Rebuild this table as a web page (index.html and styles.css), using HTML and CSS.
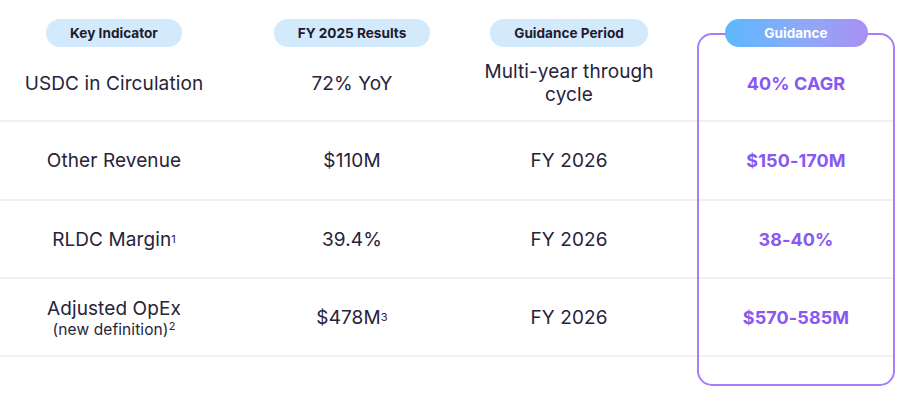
FILE: index.html
```
<!DOCTYPE html>
<html lang="en">
<head>
<meta charset="utf-8">
<title>Guidance</title>
<link rel="stylesheet" href="styles.css">
</head>
<body>
<div class="table">
  <div class="head c1"><span class="pill">Key Indicator</span></div>
  <div class="head c2"><span class="pill">FY 2025 Results</span></div>
  <div class="head c3"><span class="pill">Guidance Period</span></div>
  <div class="guide-box"><span class="pill pill-guide">Guidance</span></div>

  <div class="cell c1 r1">USDC in Circulation</div>
  <div class="cell c2 r1">72% YoY</div>
  <div class="cell c3 r1">Multi-year through<br>cycle</div>
  <div class="cell c5 r1 val">40% CAGR</div>
  <div class="line l1"></div>

  <div class="cell c1 r2">Other Revenue</div>
  <div class="cell c2 r2">$110M</div>
  <div class="cell c3 r2">FY 2026</div>
  <div class="cell c5 r2 val">$150-170M</div>
  <div class="line l2"></div>

  <div class="cell c1 r3">RLDC Margin<sup>1</sup></div>
  <div class="cell c2 r3">39.4%</div>
  <div class="cell c3 r3">FY 2026</div>
  <div class="cell c5 r3 val">38-40%</div>
  <div class="line l3"></div>

  <div class="cell c1 r4"><span class="stack"><span class="main">Adjusted OpEx</span><span class="sub">(new definition)<sup>2</sup></span></span></div>
  <div class="cell c2 r4">$478M<sup>3</sup></div>
  <div class="cell c3 r4">FY 2026</div>
  <div class="cell c5 r4 val">$570-585M</div>
  <div class="line l4"></div>
</div>
</body>
</html>
```
FILE: styles.css
```
* { box-sizing: border-box; }
html, body { margin: 0; padding: 0; background: #ffffff; }
body {
  font-family: Inter, "Noto Sans", sans-serif;
  color: #27233a;
  width: 906px;
  height: 394px;
  overflow: hidden;
}
.table {
  display: grid;
  width: 895px;
  grid-template-columns: 228px 248px 186px 35px 198px;
  grid-template-rows: 47px 73px 2px 77px 2px 76px 2px 76px 2px 29px;
}
.c1 { grid-column: 1; }
.c2 { grid-column: 2; }
.c3 { grid-column: 3; }
.c5 { grid-column: 5; }
.head {
  grid-row: 1;
  display: flex;
  justify-content: center;
  align-items: flex-start;
  padding-top: 19px;
}
.pill {
  display: inline-flex;
  align-items: center;
  justify-content: center;
  height: 28px;
  padding: 0 24px;
  border-radius: 14px;
  background: #d3eafd;
  color: #1f1b2d;
  font-size: 13.6px;
  font-weight: 700;
  white-space: nowrap;
}
.guide-box {
  grid-column: 5;
  grid-row: 1 / 11;
  margin-top: 33px;
  border: 2px solid #a47ff8;
  border-radius: 15px;
  display: flex;
  justify-content: center;
  align-items: flex-start;
  position: relative;
  z-index: 1;
}
.pill-guide {
  margin-top: -16px;
  padding: 0;
  width: 143px;
  background: linear-gradient(90deg, #5db8fd 0%, #8ea9f8 55%, #a990f2 100%);
  color: #ffffff;
}
.cell {
  display: flex;
  align-items: center;
  justify-content: center;
  text-align: center;
  font-size: 19px;
  line-height: 23px;
  position: relative;
  z-index: 2;
  letter-spacing: 0.1px;
}
.r1 { grid-row: 2; }
.r2 { grid-row: 4; }
.r3 { grid-row: 6; }
.r4 { grid-row: 8; }
.r1.c3 { padding-bottom: 2px; }
.val {
  font-weight: 700;
  color: #8a57f2;
  font-size: 18px;
}
.line {
  grid-column: 1 / 6;
  background: #f0eff5;
}
.l1 { grid-row: 3; }
.l2 { grid-row: 5; }
.l3 { grid-row: 7; }
.l4 { grid-row: 9; }
sup {
  font-size: 11px;
  line-height: 0;
  vertical-align: 9px;
}
.stack { display: flex; flex-direction: column; align-items: center; padding-top: 3px; }
.stack .main { line-height: 22px; }
.stack .sub { font-size: 15.5px; line-height: 20px; }
.stack .sub sup { font-size: 11px; vertical-align: 5px; }
```
